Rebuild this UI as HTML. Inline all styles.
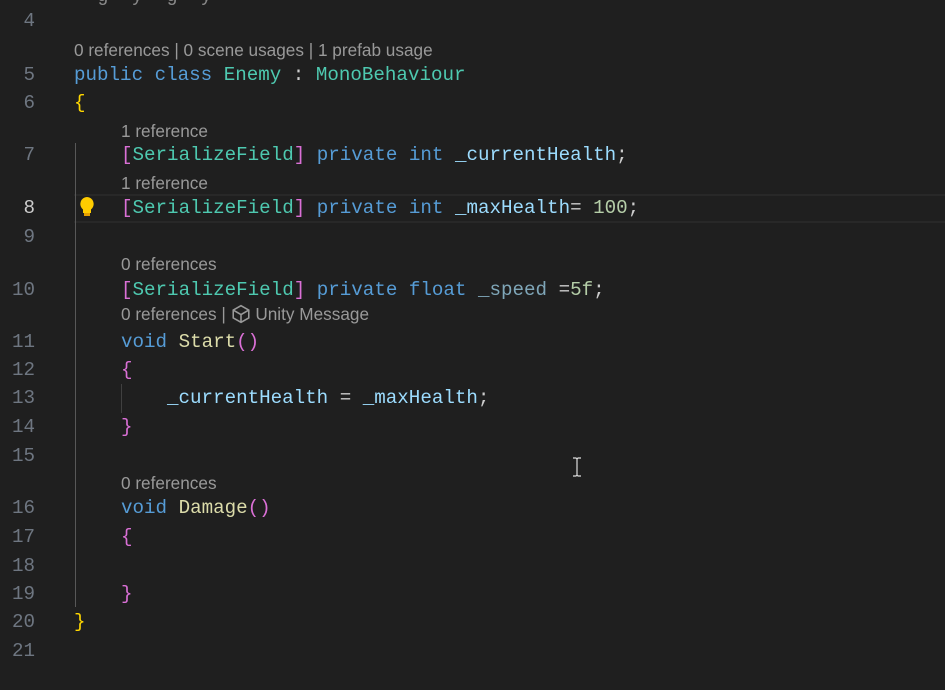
<!DOCTYPE html>
<html><head><meta charset="utf-8"><style>
html,body{margin:0;padding:0;background:#1f1f1f;width:945px;height:690px;overflow:hidden;position:relative}
.l{position:absolute;height:28px;line-height:28px;font-family:"Liberation Mono",monospace;font-size:19.2px;white-space:pre;color:#cccccc}
.n{position:absolute;left:0;width:35px;text-align:right;height:28px;line-height:28px;font-family:"Liberation Mono",monospace;font-size:19.2px;color:#6e7681}
.c{position:absolute;height:20px;line-height:20px;font-family:"Liberation Sans",sans-serif;font-size:17.2px;color:#999999;white-space:pre}
.k{color:#569cd6}.t{color:#4ec9b0}.y{color:#ffd700}.m{color:#da70d6}.f{color:#dcdcaa}.v{color:#9cdcfe}.d{color:#b5cea8}.vd{color:#7fa6b8}
.g{position:absolute;width:1px;background:#404040}
</style></head><body>
<div style="position:absolute;left:74px;top:194px;width:871px;height:25px;border-top:2px solid #282828;border-bottom:2px solid #282828"></div>
<div class="g" style="left:75px;top:143px;height:464px;background:#585858"></div>
<div class="g" style="left:121px;top:384px;height:29px"></div>

<div class="l" style="left:74px;top:-18px;color:#888">  g  y  g  y</div>

<div class="n" style="top:7px">4</div>
<div class="c" style="left:74px;top:40px">0 references | 0 scene usages | 1 prefab usage</div>
<div class="n" style="top:61px">5</div><div class="l" style="left:74px;top:61px"><span class="k">public</span> <span class="k">class</span> <span class="t">Enemy</span> : <span class="t">MonoBehaviour</span></div>
<div class="n" style="top:89px">6</div><div class="l" style="left:74px;top:89px"><span class="y">{</span></div>
<div class="c" style="left:121px;top:121px">1 reference</div>
<div class="n" style="top:141px">7</div><div class="l" style="left:121px;top:141px"><span class="m">[</span><span class="t">SerializeField</span><span class="m">]</span> <span class="k">private</span> <span class="k">int</span> <span class="v">_currentHealth</span>;</div>
<div class="c" style="left:121px;top:173px">1 reference</div>
<div class="n" style="top:194px;color:#cccccc">8</div><div class="l" style="left:121px;top:194px"><span class="m">[</span><span class="t">SerializeField</span><span class="m">]</span> <span class="k">private</span> <span class="k">int</span> <span class="v">_maxHealth</span>= <span class="d">100</span>;</div>
<svg style="position:absolute;left:78px;top:196px" width="18" height="22" viewBox="0 0 18 22"><path d="M9 1a7 7 0 0 0-4 12.5V17h8v-3.5A7 7 0 0 0 9 1z" fill="#ffcc00"/><rect x="6" y="17" width="6" height="3" fill="#e5a000"/></svg>
<div class="n" style="top:223px">9</div>
<div class="c" style="left:121px;top:254px">0 references</div>
<div class="n" style="top:276px">10</div><div class="l" style="left:121px;top:276px"><span class="m">[</span><span class="t">SerializeField</span><span class="m">]</span> <span class="k">private</span> <span class="k">float</span> <span class="vd">_speed</span> =<span class="d">5f</span>;</div>
<div class="c" style="left:121px;top:304px">0 references | <svg width="20" height="20" viewBox="0 0 18 18" style="vertical-align:-4px"><path d="M9 1.5L16 5.5V12.5L9 16.5L2 12.5V5.5Z M2 5.5L9 9.5L16 5.5 M9 9.5V16.5" fill="none" stroke="#999" stroke-width="1.4"/></svg> Unity Message</div>
<div class="n" style="top:328px">11</div><div class="l" style="left:121px;top:328px"><span class="k">void</span> <span class="f">Start</span><span class="m">()</span></div>
<div class="n" style="top:356px">12</div><div class="l" style="left:121px;top:356px"><span class="m">{</span></div>
<div class="n" style="top:384px">13</div><div class="l" style="left:167px;top:384px"><span class="v">_currentHealth</span> = <span class="v">_maxHealth</span>;</div>
<div class="n" style="top:413px">14</div><div class="l" style="left:121px;top:413px"><span class="m">}</span></div>
<div class="n" style="top:442px">15</div>
<div class="c" style="left:121px;top:473px">0 references</div>
<div class="n" style="top:494px">16</div><div class="l" style="left:121px;top:494px"><span class="k">void</span> <span class="f">Damage</span><span class="m">()</span></div>
<div class="n" style="top:523px">17</div><div class="l" style="left:121px;top:523px"><span class="m">{</span></div>
<div class="n" style="top:552px">18</div>
<div class="n" style="top:580px">19</div><div class="l" style="left:121px;top:580px"><span class="m">}</span></div>
<div class="n" style="top:608px">20</div><div class="l" style="left:74px;top:608px"><span class="y">}</span></div>
<div class="n" style="top:637px">21</div>
<svg style="position:absolute;left:571px;top:457px" width="12" height="20" viewBox="0 0 12 20"><path d="M2 1h3l1 1 1-1h3M6 2v16M2 19h3l1-1 1 1h3" fill="none" stroke="#ddd" stroke-width="1.2"/></svg>
</body></html>
